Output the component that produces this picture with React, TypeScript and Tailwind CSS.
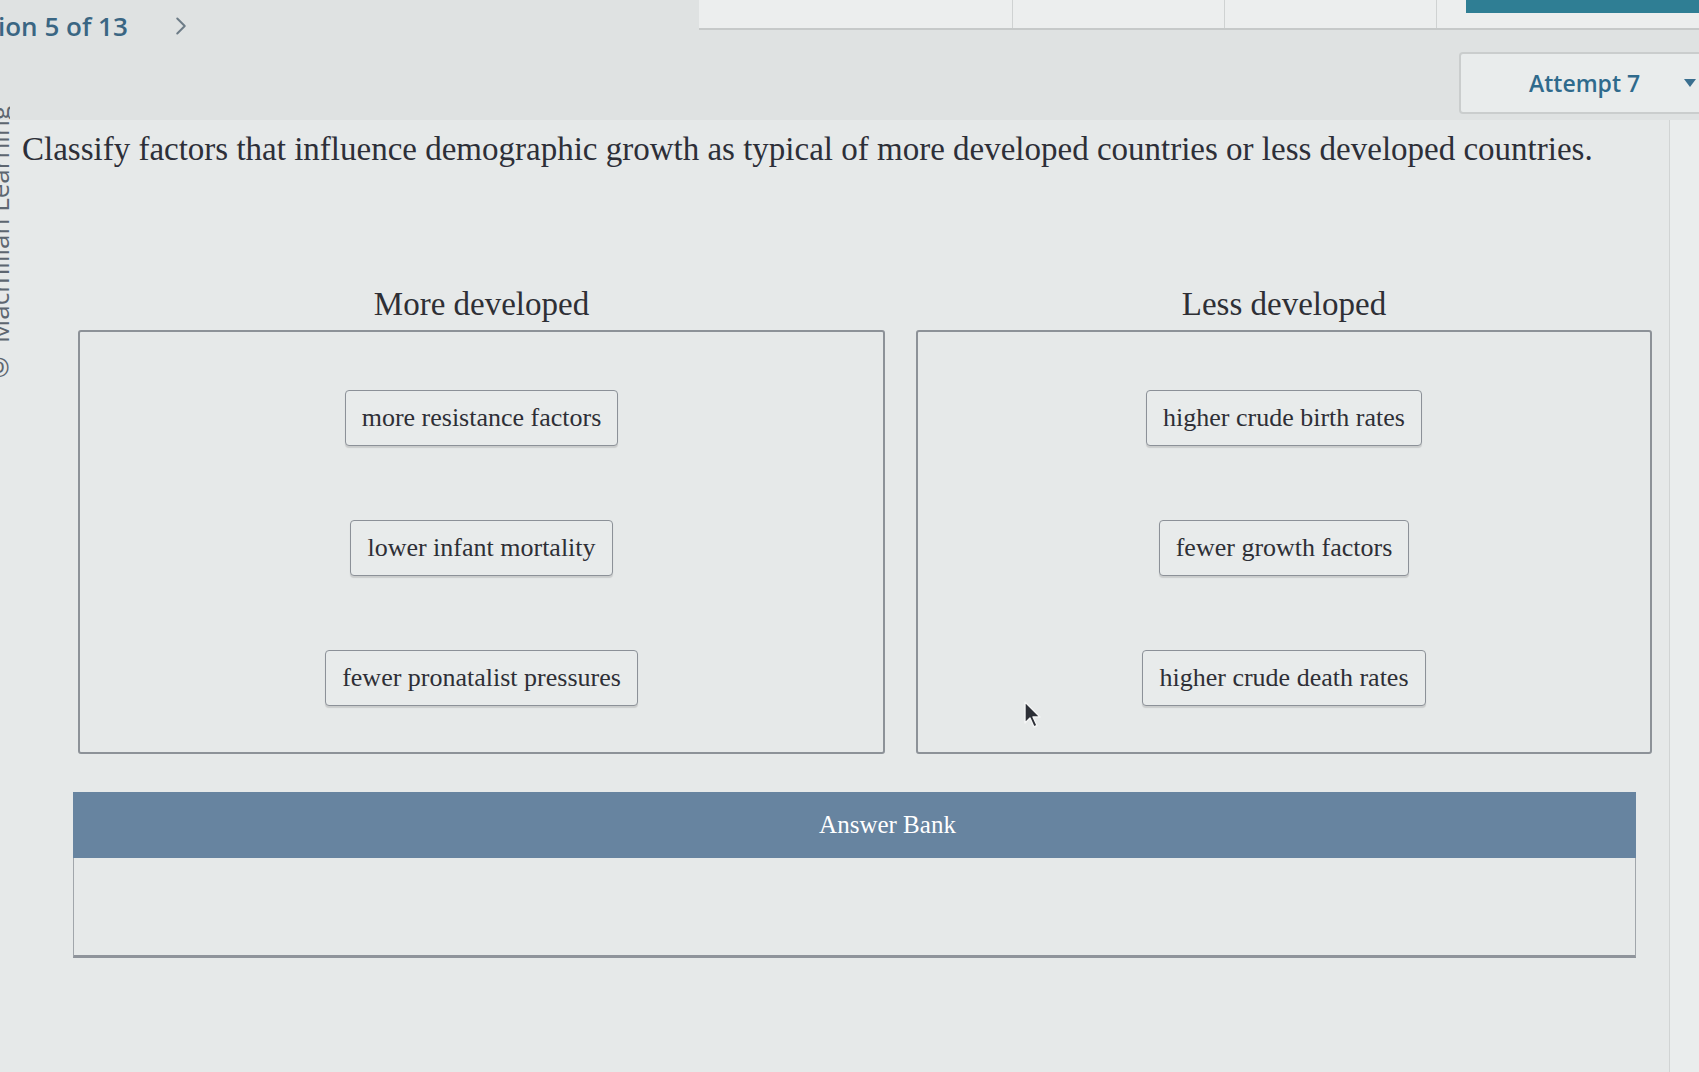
import React from "react";
import { ChevronRight } from "lucide-react";

const moreDeveloped = [
  "more resistance factors",
  "lower infant mortality",
  "fewer pronatalist pressures",
];

const lessDeveloped = [
  "higher crude birth rates",
  "fewer growth factors",
  "higher crude death rates",
];

function Chip({ label }: { label: string }) {
  return (
    <div className="rounded-[4px] border-[1.5px] border-[#8c9198] bg-[#e8ebeb] px-[16px] py-[12px] text-[26px] leading-[30px] text-[#2e2f36] shadow-[0_2px_1px_rgba(0,0,0,0.12)]">
      {label}
    </div>
  );
}

function DropZone({ title, items, width }: { title: string; items: string[]; width: string }) {
  return (
    <div className={`flex flex-col ${width}`}>
      <h2 className="mb-[6px] text-center text-[33px] leading-[40px] text-[#2e2f35]">{title}</h2>
      <div className="flex flex-col items-center gap-[74px] rounded-[3px] border-2 border-[#8d9298] pb-[46px] pt-[58px]">
        {items.map((item) => (
          <Chip key={item} label={item} />
        ))}
      </div>
    </div>
  );
}

export default function App() {
  return (
    <div className="relative flex h-[1072px] w-[1699px] flex-col overflow-hidden bg-[#e6e9e9] font-['Liberation_Serif',serif] text-[#2e2f35]">
      <header className="flex h-[120px] shrink-0 flex-col bg-[#dfe2e2]">
        <div className="flex items-start">
          <div className="-ml-[2px] flex items-center gap-[38px] pt-[10px] font-['Open_Sans',sans-serif]">
            <span className="text-[26px] font-semibold leading-[32px] text-[#3a6683]">ion 5 of 13</span>
            <ChevronRight size={30} strokeWidth={1.6} className="text-[#6d7c87]" />
          </div>
          <nav className="ml-auto flex h-[30px] w-[1000px] border-b-2 border-[#c6c9c9] bg-[#eceeee]">
            <div className="flex-1" />
            <div className="w-[212px] border-l border-[#cfd2d2]" />
            <div className="w-[212px] border-l border-[#cfd2d2]" />
            <div className="w-[263px] border-l border-[#cfd2d2] pl-[29px]">
              <div className="h-[13px] bg-[#2f7e94]" />
            </div>
          </nav>
        </div>
        <div className="flex justify-end pt-[10px]">
          <div className="-mr-[12px] flex h-[62px] w-[252px] items-center rounded-[4px] border-2 border-[#cacdcd] bg-[#e9ecec] pl-[68px] font-['Open_Sans',sans-serif]">
            <span className="text-[23px] font-semibold text-[#2f6a8c]">Attempt 7</span>
            <span className="ml-[44px] h-0 w-0 border-x-[6px] border-t-[8px] border-x-transparent border-t-[#3a6f8f]" />
          </div>
        </div>
      </header>

      <div className="flex min-h-0 flex-1">
        {/* side copyright, mostly cut off by the screen edge */}
        <div className="-mt-[14px] w-[10px] shrink-0 overflow-hidden">
          <div className="-ml-[14px] rotate-180 font-['Open_Sans',sans-serif] text-[26px] leading-[26px] text-[#5d6670] [writing-mode:vertical-rl]">
            © Macmillan Learning
          </div>
        </div>

        <main className="flex min-w-0 flex-1 flex-col">
          <p className="pl-[12px] pt-[10px] text-[33px] leading-[38px] text-[#2d2f38]">
            Classify factors that influence demographic growth as typical of more developed countries or less developed
            countries.
          </p>

          <section className="mt-[116px] flex gap-[31px] pl-[68px]">
            <DropZone title="More developed" items={moreDeveloped} width="w-[807px]" />
            <DropZone title="Less developed" items={lessDeveloped} width="w-[736px]" />
          </section>

          <section className="ml-[63px] mt-[38px] w-[1563px]">
            <div className="flex h-[66px] items-center justify-center bg-[#6784a0] pl-[66px] text-[25px] text-white">
              Answer Bank
            </div>
            <div className="h-[100px] border-x border-b-[3px] border-x-[#a1a6ab] border-b-[#8f949b]" />
          </section>
        </main>

        {/* right scroll gutter */}
        <div className="w-[30px] shrink-0 border-l border-[#d1d4d4] bg-[#eaeded]" />
      </div>

      {/* mouse pointer */}
      <svg className="absolute left-[1024px] top-[701px]" width="18" height="28" viewBox="0 0 18 28">
        <path d="M1 1 L1 22 L6 17 L10 26 L13 24.5 L9 16 L16 16 Z" fill="#2c2f36" stroke="#f4f5f5" strokeWidth="1.4" strokeLinejoin="round" />
      </svg>
    </div>
  );
}
